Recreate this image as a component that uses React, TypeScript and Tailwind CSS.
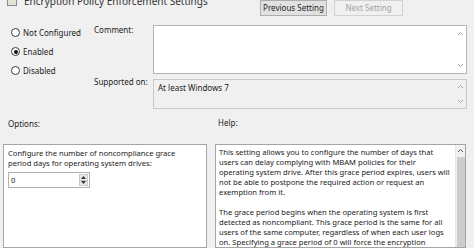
import React from "react";

const font = { fontFamily: '"Noto Sans", "Open Sans", sans-serif' };

function Radio({ label, checked }: { label: string; checked?: boolean }) {
  return (
    <div className="flex items-center h-[19px]">
      <div className="w-[9px] h-[9px] rounded-full border border-[#3c3c3c] bg-white flex items-center justify-center">
        {checked && <div className="w-[4px] h-[4px] rounded-full bg-[#111]" />}
      </div>
      <span className="ml-[3px] text-[8px] text-[#222] leading-none">{label}</span>
    </div>
  );
}

function Chevron({ up }: { up?: boolean }) {
  return (
    <svg width="7" height="5" viewBox="0 0 7 5">
      <path d={up ? "M1 4 L3.5 1.5 L6 4" : "M1 1 L3.5 3.5 L6 1"} fill="none" stroke="#a6a6a6" strokeWidth="1" />
    </svg>
  );
}

const helpLines1 = [
  "This setting allows you to configure the number of days that",
  "users can delay complying with MBAM policies for their",
  "operating system drive. After this grace period expires, users will",
  "not be able to postpone the required action or request an",
  "exemption from it.",
];
const helpLines2 = [
  "The grace period begins when the operating system is first",
  "detected as noncompliant. This grace period is the same for all",
  "users of the same computer, regardless of when each user logs",
  "on. Specifying a grace period of 0 will force the encryption",
  "process to begin immediately.",
];

export default function App() {
  return (
    <div className="w-[474px] h-[248px] overflow-hidden bg-[#f0f0f0] flex flex-col text-[#1e1e1e]" style={font}>
      {/* header */}
      <div className="h-[25px] flex items-start shrink-0">
        <div className="flex items-start pl-[7px] mt-[-4px]">
          <div className="w-[10px] h-[10px] border border-[#8a8a8a] bg-[#dfe6d6]" />
          <span className="ml-[7px] text-[10px] leading-[10px] text-[#333]">Encryption Policy Enforcement Settings</span>
        </div>
        <div className="ml-auto mr-[71px] flex gap-[7px]">
          <div className="w-[67px] h-[16px] border border-[#adadad] bg-[#e1e1e1] flex items-center justify-center text-[8px] leading-none text-[#1e1e1e]">
            Previous Setting
          </div>
          <div className="w-[69px] h-[16px] border border-[#d2d2d2] bg-[#f0f0f0] flex items-center justify-center text-[8px] leading-none text-[#a3a3a3]">
            Next Setting
          </div>
        </div>
      </div>

      {/* top area */}
      <div className="flex shrink-0">
        <div className="w-[94px] pl-[11px] flex flex-col mt-[-2px]">
          <Radio label="Not Configured" />
          <Radio label="Enabled" checked />
          <Radio label="Disabled" />
        </div>
        <div className="w-[59px] text-[8px] leading-none text-[#222]">
          <div className="mt-[1px]">Comment:</div>
          <div className="mt-[44px]">Supported on:</div>
        </div>
        <div className="w-[314px] flex flex-col gap-[5px]">
          <div className="h-[49px] border border-[#b4b4b4] bg-white flex justify-end">
            <div className="w-[11px] flex flex-col items-center justify-between py-[5px]">
              <Chevron up />
              <Chevron />
            </div>
          </div>
          <div className="h-[30px] border border-[#c9c9c9] bg-[#f0f0f0] flex">
            <div className="flex-1 pl-[4px] pt-[4px] text-[8px] leading-none text-[#222]">At least Windows 7</div>
            <div className="w-[11px] flex flex-col items-center justify-between py-[4px]">
              <Chevron up />
              <Chevron />
            </div>
          </div>
        </div>
      </div>

      {/* labels */}
      <div className="flex mt-[11px] h-[24px] shrink-0 text-[8px] leading-none text-[#222]">
        <div className="w-[215px] pl-[8px]">Options:</div>
        <div className="pl-[3px] mt-[-1px]">Help:</div>
      </div>

      {/* bottom panes */}
      <div className="flex flex-1 min-h-0">
        <div className="ml-[3px] w-[204px] border border-[#a5a5a5] bg-white pl-[4px] pt-[3px] text-[7.6px] leading-[10px] text-[#222]">
          <div className="whitespace-nowrap">Configure the number of noncompliance grace</div>
          <div className="whitespace-nowrap">period days for operating system drives:</div>
          <div className="mt-[4px] w-[82px] h-[16px] border border-[#b0b0b0] flex items-center">
            <span className="flex-1 pl-[2px]">0</span>
            <div className="w-[9px] h-[12px] mr-[1px] flex flex-col border border-[#c8c8c8] bg-[#eaeaea]">
              <div className="flex-1 flex items-center justify-center border-b border-[#c8c8c8]">
                <svg width="5" height="3" viewBox="0 0 5 3"><path d="M0 3 L2.5 0 L5 3 Z" fill="#333" /></svg>
              </div>
              <div className="flex-1 flex items-center justify-center">
                <svg width="5" height="3" viewBox="0 0 5 3"><path d="M0 0 L2.5 3 L5 0 Z" fill="#333" /></svg>
              </div>
            </div>
          </div>
        </div>
        <div className="ml-[8px] w-[251px] flex border border-[#a5a5a5] bg-white">
          <div className="flex-1 pl-[3px] pt-[2px] text-[7.6px] leading-[10px] text-[#222]">
            {helpLines1.map((l) => (
              <div key={l} className="whitespace-nowrap">{l}</div>
            ))}
            <div className="h-[10px]" />
            {helpLines2.map((l) => (
              <div key={l} className="whitespace-nowrap">{l}</div>
            ))}
          </div>
          <div className="w-[10px] bg-[#f0f0f0] flex flex-col items-center border-l border-[#e6e6e6]">
            <div className="h-[10px] flex items-center justify-center">
              <svg width="7" height="5" viewBox="0 0 7 5">
                <path d="M1 4 L3.5 1.5 L6 4" fill="none" stroke="#555" strokeWidth="1" />
              </svg>
            </div>
            <div className="w-[8px] flex-1 bg-[#cdcdcd] mt-[2px]" />
          </div>
        </div>
      </div>
    </div>
  );
}
